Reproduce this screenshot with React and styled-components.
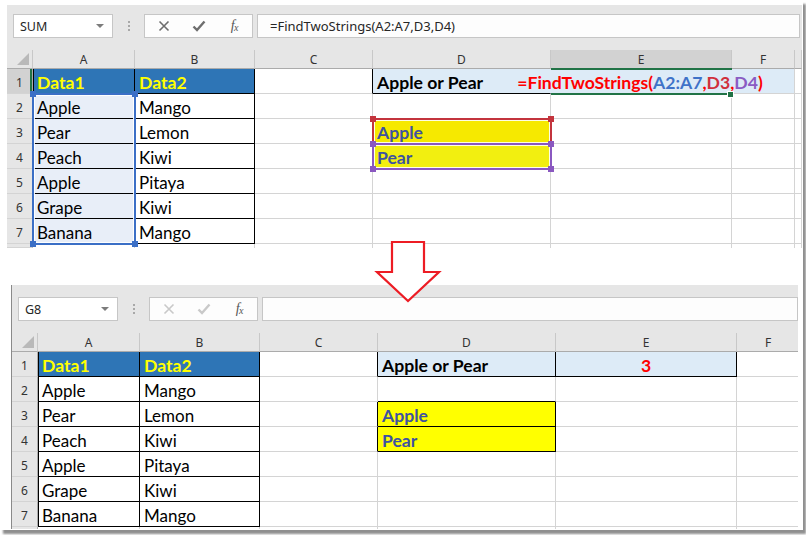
import React from 'react';
import styled, { createGlobalStyle } from 'styled-components';

const Global = createGlobalStyle`
  html, body { margin: 0; padding: 0; background: #fff; }
  body { width: 806px; height: 535px; overflow: hidden; font-family: "Lato", sans-serif; }
  * { box-sizing: border-box; }
`;

const Frame = styled.div`
  position: relative;
  width: 803px;
  height: 530px;
  background: #fff;
  box-shadow: 3px 4px 2px #8f8f8f;
  padding-top: 5px;
  display: flex;
  flex-direction: column;
`;

const Panel = styled.div`
  margin-left: ${(p) => p.$left}px;
  margin-top: ${(p) => p.$top}px;
  width: ${(p) => p.$width}px;
  height: ${(p) => p.$height}px;
  display: flex;
  flex-direction: column;
  overflow: hidden;
  background: #fff;
  border-left: ${(p) => (p.$edge ? '1px solid #8a8a8a' : 'none')};
`;

const Toolbar = styled.div`
  height: ${(p) => p.$h}px;
  flex: none;
  background: #e6e6e6;
  padding: ${(p) => p.$pt}px ${(p) => p.$pr}px 0 ${(p) => p.$pl}px;
  display: flex;
  align-items: flex-start;
`;

const NameBox = styled.div`
  width: 100px;
  height: 24px;
  border: 1px solid #c6c6c6;
  background: #fff;
  display: flex;
  align-items: center;
  justify-content: space-between;
  padding: 0 6px 0 6px;
  font-family: "Noto Sans", sans-serif;
  font-size: 12.5px;
  color: #262626;
`;

const DropCaret = styled.span`
  width: 0;
  height: 0;
  border-left: 4px solid transparent;
  border-right: 4px solid transparent;
  border-top: 4px solid #7c7c7c;
  margin-right: 2px;
`;

const Grip = styled.div`
  width: 31px;
  height: 24px;
  display: flex;
  flex-direction: column;
  align-items: center;
  justify-content: center;
  gap: 2px;
  span {
    width: 2px;
    height: 2px;
    background: #a8a8a8;
  }
`;

const FxBox = styled.div`
  width: 109px;
  height: 24px;
  border: 1px solid #c6c6c6;
  background: #fdfdfd;
  display: flex;
  align-items: center;
  padding-left: 1px;
`;

const FxButton = styled.div`
  width: 36px;
  height: 22px;
  display: flex;
  align-items: center;
  justify-content: center;
  color: ${(p) => (p.$off ? '#c9c9c9' : '#6e6e6e')};
`;

const FxLabel = styled.span`
  font-family: "Liberation Serif", serif;
  font-style: italic;
  font-size: 14px;
  color: #555;
  letter-spacing: -0.5px;
  sub {
    font-size: 10px;
    vertical-align: -1px;
  }
`;

const FormulaInput = styled.div`
  flex: 1;
  height: 24px;
  margin-left: 4px;
  border: 1px solid #c6c6c6;
  background: #fdfdfd;
  display: flex;
  align-items: center;
  padding-left: 12px;
  font-family: "Noto Sans", sans-serif;
  font-size: 13px;
  color: #262626;
  white-space: nowrap;
`;

const Sheet = styled.div`
  flex: 1;
  display: grid;
  grid-template-columns: 26px 102px 120px 118px 178px 181px 63px 1fr;
  grid-template-rows: 19px repeat(7, 25px) 1fr;
`;

const HeadBase = styled.div`
  grid-row: ${(p) => p.$row};
  grid-column: ${(p) => p.$col};
  background: ${(p) => (p.$active ? '#d2d2d2' : '#e6e6e6')};
  font-family: "Noto Sans", sans-serif;
  font-size: 12px;
  color: #333;
  display: flex;
  align-items: center;
  justify-content: center;
`;

const Corner = styled(HeadBase)`
  position: relative;
  border-right: 1px solid #c8c8c8;
  border-bottom: 1px solid #ababab;
  &::after {
    content: '';
    position: absolute;
    right: 3px;
    bottom: 3px;
    border-left: 12px solid transparent;
    border-bottom: 12px solid #b9b9b9;
  }
`;

const ColHead = styled(HeadBase)`
  border-right: 1px solid #c8c8c8;
  border-bottom: 1px solid #ababab;
  padding-top: 1px;
`;

const RowHead = styled(HeadBase)`
  border-right: 1px solid #ababab;
  border-bottom: 1px solid #d4d4d4;
  padding-top: 3px;
  box-shadow: ${(p) => (p.$active ? 'inset -2px 0 0 #217346' : 'none')};
`;

const Cell = styled.div`
  grid-row: ${(p) => p.$row};
  grid-column: ${(p) => p.$col};
  background: ${(p) => p.$bg || '#fff'};
  border-right: 1px solid ${(p) => p.$right || '#d4d4d4'};
  border-bottom: ${(p) => (p.$noBottom ? '0' : `1px solid ${p.$bottom || '#d4d4d4'}`)};
  box-shadow: ${(p) => (p.$leftLine ? `inset 1px 0 0 ${p.$leftLine}` : 'none')};
  display: flex;
  align-items: center;
  justify-content: ${(p) => (p.$center ? 'center' : 'flex-start')};
  padding: 3px 0 0 ${(p) => (p.$center ? 0 : 4)}px;
  font-size: ${(p) => (p.$bold ? 17.6 : 17)}px;
  line-height: 21px;
  font-weight: ${(p) => (p.$bold ? 700 : 400)};
  color: ${(p) => p.$color || '#000'};
  white-space: nowrap;
  position: ${(p) => (p.$lift ? 'relative' : 'static')};
  z-index: ${(p) => (p.$lift ? 1 : 'auto')};
`;

const Seg = styled.span`
  color: ${(p) => p.$c};
`;

const TextCaret = styled.span`
  display: inline-block;
  width: 1px;
  height: 23px;
  background: #000;
  margin-left: 2px;
  vertical-align: -5px;
`;

const RefBox = styled.div`
  grid-row: ${(p) => p.$row};
  grid-column: ${(p) => p.$col};
  margin: -1px -1px -1px -1px;
  border: 2px solid ${(p) => p.$color};
  box-shadow: inset 0 0 0 1px rgba(255, 255, 255, 0.9);
  position: relative;
  z-index: 2;
  pointer-events: none;
`;

const Handle = styled.span`
  position: absolute;
  width: 6px;
  height: 6px;
  background: ${(p) => p.$color};
  ${(p) => (p.$top ? 'top: -4px;' : 'bottom: -4px;')}
  ${(p) => (p.$leftSide ? 'left: -4px;' : 'right: -4px;')}
`;

const EditBox = styled.div`
  grid-row: 2;
  grid-column: 6;
  margin: -1px 0 -1px 0;
  border-top: 2px solid #217346;
  border-bottom: 2px solid #217346;
  position: relative;
  z-index: 2;
  pointer-events: none;
`;

const FillHandle = styled.span`
  position: absolute;
  right: -1px;
  bottom: -4px;
  width: 5px;
  height: 5px;
  background: #217346;
  outline: 1px solid #fff;
`;

const Arrow = styled.svg`
  position: absolute;
  left: 370px;
  top: 236px;
  z-index: 5;
`;

const COLS = ['A', 'B', 'C', 'D', 'E', 'F', ''];
const DATA = [
  ['Data1', 'Data2'],
  ['Apple', 'Mango'],
  ['Pear', 'Lemon'],
  ['Peach', 'Kiwi'],
  ['Apple', 'Pitaya'],
  ['Grape', 'Kiwi'],
  ['Banana', 'Mango'],
];

const BLUE_HDR = '#2e75b6';
const LIGHT = '#ddebf7';
const NAMECOLOR = '#3d52a1';

function XIcon() {
  return (
    <svg width="12" height="12" viewBox="0 0 12 12">
      <path d="M1.5 1.5 L10.5 10.5 M10.5 1.5 L1.5 10.5" stroke="currentColor" strokeWidth="1.6" fill="none" />
    </svg>
  );
}

function CheckIcon() {
  return (
    <svg width="14" height="12" viewBox="0 0 14 12">
      <path d="M1.5 6.5 L5 10 L12.5 1.5" stroke="currentColor" strokeWidth="2.4" fill="none" />
    </svg>
  );
}

function FormulaRich() {
  return (
    <>
      <Seg $c="#ff0000">=FindTwoStrings(</Seg>
      <Seg $c="#3f72c8">A2:A7</Seg>
      <Seg $c="#ff0000">,</Seg>
      <Seg $c="#d0303c">D3</Seg>
      <Seg $c="#ff0000">,</Seg>
      <Seg $c="#8a5bc3">D4</Seg>
      <Seg $c="#ff0000">)</Seg>
      <TextCaret />
    </>
  );
}

function cellProps(r, c, editing) {
  const p = { $row: r + 1, $col: c + 2, text: '' };
  if (c <= 1) {
    p.text = DATA[r - 1][c];
    p.$right = '#000';
    p.$bottom = '#000';
    if (c === 0) p.$leftLine = '#000';
    if (r === 1) {
      p.$bg = BLUE_HDR;
      p.$color = '#ffff00';
      p.$bold = true;
    } else if (c === 0 && editing) {
      p.$bg = '#e8eef8';
    }
  }
  if (c === 2 && (r === 1 || r === 3 || r === 4)) p.$right = '#000';
  if (c === 3) {
    if (r === 1) {
      p.text = 'Apple or Pear';
      p.$bold = true;
      p.$bg = LIGHT;
      p.$right = editing ? LIGHT : '#000';
      p.$bottom = '#000';
    }
    if (r === 2) p.$bottom = '#000';
    if (r === 3 || r === 4) {
      p.text = r === 3 ? 'Apple' : 'Pear';
      p.$bold = true;
      p.$color = NAMECOLOR;
      p.$bg = editing ? (r === 3 ? '#f6e900' : '#f2ef10') : '#ffff00';
      p.$right = '#000';
      p.$bottom = '#000';
    }
  }
  if (c === 4 && r === 1) {
    p.$bg = LIGHT;
    p.$bottom = '#000';
    p.$center = true;
    p.$bold = true;
    if (editing) {
      p.$right = LIGHT;
      p.$lift = true;
      p.rich = true;
    } else {
      p.$right = '#000';
      p.text = '3';
      p.$color = '#ff0000';
    }
  }
  if (c === 5 && r === 1 && editing) p.$bg = LIGHT;
  return p;
}

function Spreadsheet({ editing }) {
  const items = [];
  items.push(<Corner key="corner" $row={1} $col={1} />);
  COLS.forEach((L, i) => {
    items.push(
      <ColHead key={`h${i}`} $row={1} $col={i + 2} $active={editing && L === 'E'}>
        {L}
      </ColHead>
    );
  });
  for (let r = 1; r <= 7; r++) {
    items.push(
      <RowHead key={`r${r}`} $row={r + 1} $col={1} $active={editing && r === 1}>
        {r}
      </RowHead>
    );
    for (let c = 0; c < 7; c++) {
      const { text, rich, ...p } = cellProps(r, c, editing);
      items.push(
        <Cell key={`c${r}-${c}`} {...p}>
          {rich ? <FormulaRich /> : text}
        </Cell>
      );
    }
  }
  items.push(<RowHead key="r8" $row={9} $col={1} />);
  for (let c = 0; c < 7; c++) {
    items.push(<Cell key={`e${c}`} $row={9} $col={c + 2} $noBottom />);
  }
  if (editing) {
    const refs = [
      { row: '3 / 9', col: '2 / 3', color: '#3b6fc6' },
      { row: '4 / 5', col: '5 / 6', color: '#c3343d' },
      { row: '5 / 6', col: '5 / 6', color: '#8a58c0' },
    ];
    refs.forEach((rf, i) => {
      items.push(
        <RefBox key={`ref${i}`} $row={rf.row} $col={rf.col} $color={rf.color}>
          <Handle $top $leftSide $color={rf.color} />
          <Handle $top $color={rf.color} />
          <Handle $leftSide $color={rf.color} />
          <Handle $color={rf.color} />
        </RefBox>
      );
    });
    items.push(
      <EditBox key="edit">
        <FillHandle />
      </EditBox>
    );
  }
  return <Sheet>{items}</Sheet>;
}

function ExcelShot({ editing, name, formula, left, top, width, height, tbH, tbPt, tbPr, edge }) {
  return (
    <Panel $left={left} $top={top} $width={width} $height={height} $edge={edge}>
      <Toolbar $h={tbH} $pt={tbPt} $pr={tbPr} $pl={6}>
        <NameBox>
          <span>{name}</span>
          <DropCaret />
        </NameBox>
        <Grip>
          <span />
          <span />
          <span />
        </Grip>
        <FxBox>
          <FxButton $off={!editing}>
            <XIcon />
          </FxButton>
          <FxButton $off={!editing}>
            <CheckIcon />
          </FxButton>
          <FxButton>
            <FxLabel>
              f<sub>x</sub>
            </FxLabel>
          </FxButton>
        </FxBox>
        <FormulaInput>{formula}</FormulaInput>
      </Toolbar>
      <Spreadsheet editing={editing} />
    </Panel>
  );
}

export default function App() {
  return (
    <>
      <Global />
      <Frame>
        <ExcelShot
          editing
          name="SUM"
          formula="=FindTwoStrings(A2:A7,D3,D4)"
          left={7}
          top={0}
          width={795}
          height={243}
          tbH={45}
          tbPt={9}
          tbPr={2}
        />
        <ExcelShot
          editing={false}
          name="G8"
          formula=""
          left={11}
          top={37}
          width={787}
          height={244}
          tbH={48}
          tbPt={12}
          tbPr={0}
          edge
        />
        <Arrow width="76" height="70" viewBox="0 0 76 70">
          <polygon
            points="22,6 54,6 54,36 69,36 38,65 7,36 22,36"
            fill="#fff"
            stroke="#ed1c24"
            strokeWidth="2.2"
          />
        </Arrow>
      </Frame>
    </>
  );
}
